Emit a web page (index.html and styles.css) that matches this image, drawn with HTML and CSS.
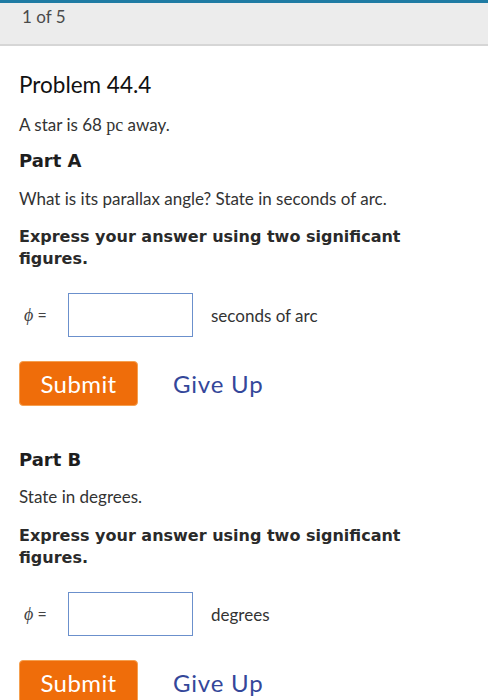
FILE: index.html
```html
<!DOCTYPE html>
<html>
<head>
<meta charset="utf-8">
<link rel="stylesheet" href="styles.css">
</head>
<body>
<div class="topline"></div>
<header class="pager">1 of 5</header>
<main class="content">
  <h1 class="title">Problem 44.4</h1>
  <p class="text intro">A star is 68 <span class="unit">pc</span> away.</p>

  <h2 class="part part-a">Part A</h2>
  <p class="text q">What is its parallax angle? State in seconds of arc.</p>
  <p class="instr">Express your answer using two significant figures.</p>
  <div class="answer">
    <span class="var"><span class="phi">ϕ</span> =</span>
    <span class="box"></span>
    <span class="units">seconds of arc</span>
  </div>
  <div class="actions">
    <button class="submit">Submit</button>
    <span class="giveup">Give Up</span>
  </div>

  <h2 class="part part-b">Part B</h2>
  <p class="text q2">State in degrees.</p>
  <p class="instr instr-b">Express your answer using two significant figures.</p>
  <div class="answer">
    <span class="var"><span class="phi">ϕ</span> =</span>
    <span class="box"></span>
    <span class="units">degrees</span>
  </div>
  <div class="actions">
    <button class="submit">Submit</button>
    <span class="giveup">Give Up</span>
  </div>
</main>
</body>
</html>
```
FILE: styles.css
```css
html, body {
  margin: 0;
  padding: 0;
  background: #ffffff;
}
body {
  font-family: Lato, "Open Sans", sans-serif;
  color: #333333;
  width: 488px;
  overflow: hidden;
}
.topline {
  height: 3px;
  background: #1f7ba3;
}
.pager {
  height: 38px;
  padding: 3px 0 0 22px;
  font-size: 17px;
  line-height: 22px;
  color: #4a4a4a;
  background: #ececec;
  border-bottom: 2px solid #d6d6d6;
}
.content {
  padding: 0 0 0 19px;
}
.title {
  margin: 25px 0 0 0;
  font-size: 22.5px;
  line-height: 28px;
  font-weight: 400;
  color: #111111;
}
.text {
  margin: 0;
  font-size: 17px;
  line-height: 22px;
  color: #333333;
}
.intro { margin-top: 15px; }
.unit {
  font-family: "Liberation Serif", serif;
  font-size: 18px;
}
.part {
  margin: 0;
  font-family: "DejaVu Sans", sans-serif;
  font-size: 18px;
  line-height: 22px;
  font-weight: 700;
  color: #1e1e1e;
}
.part-a { margin-top: 14px; }
.q { margin-top: 16px; }
.instr {
  margin: 16px 0 0 0;
  width: 420px;
  font-family: "DejaVu Sans", sans-serif;
  font-size: 16px;
  line-height: 22px;
  font-weight: 700;
  color: #2a2a2a;
}
.answer {
  display: flex;
  align-items: center;
  margin-top: 23px;
  height: 44px;
}
.var {
  width: 49px;
  padding-left: 5px;
  box-sizing: border-box;
  font-size: 16px;
  color: #444444;
}
.phi {
  font-family: "Liberation Serif", serif;
  font-style: italic;
  font-size: 18px;
}
.box {
  width: 125px;
  height: 44px;
  box-sizing: border-box;
  border: 1.5px solid #6b90cc;
  background: #ffffff;
}
.units {
  margin-left: 18px;
  font-size: 17px;
  color: #333333;
}
.actions {
  display: flex;
  align-items: center;
  margin-top: 24px;
  height: 45px;
}
.submit {
  width: 119px;
  height: 45px;
  border: 1px solid #f5a050;
  border-radius: 4px;
  background: #ef6d0a;
  color: #ffffff;
  font-family: Lato, "Open Sans", sans-serif;
  font-size: 24px;
  letter-spacing: 0.4px;
  padding: 0;
}
.giveup {
  margin-left: 35px;
  font-size: 24px;
  letter-spacing: 0.8px;
  color: #34479a;
}
.part-b { margin-top: 43px; }
.q2 { margin-top: 15px; }
.instr-b { margin-top: 17px; }
```
